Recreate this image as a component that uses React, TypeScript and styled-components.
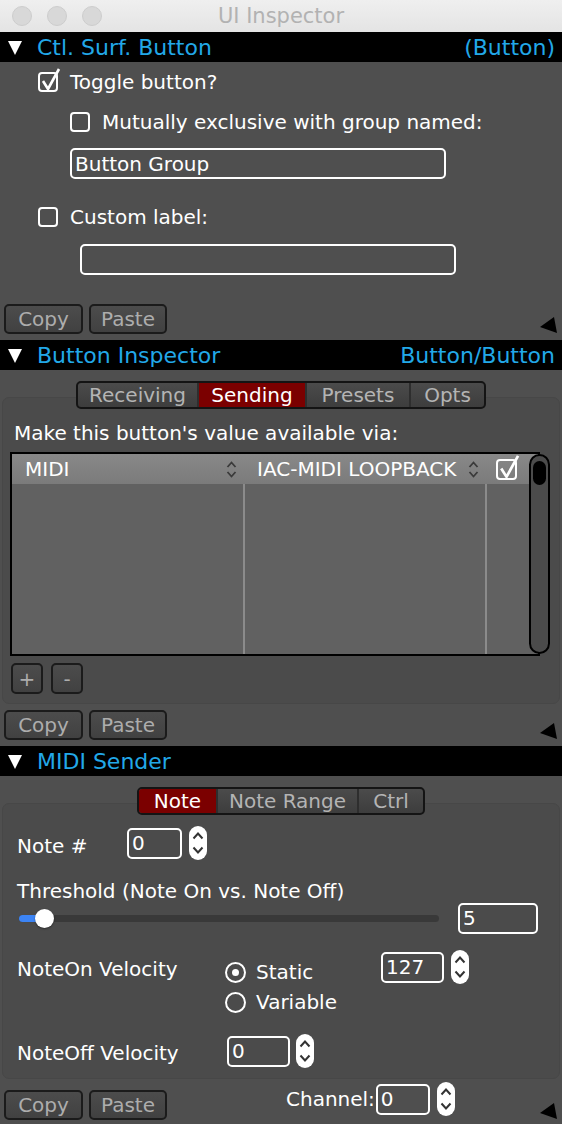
import React from "react";
import styled, { createGlobalStyle } from "styled-components";

const GlobalStyle = createGlobalStyle`
  html, body {
    margin: 0;
    padding: 0;
    background: #4f4f4f;
  }
  body {
    font-family: "DejaVu Sans", "Liberation Sans", sans-serif;
    color: #ffffff;
  }
  * {
    box-sizing: border-box;
  }
`;

const Window = styled.div`
  width: 562px;
  height: 1124px;
  overflow: hidden;
  background: #4f4f4f;
  display: flex;
  flex-direction: column;
`;

const TitleBar = styled.div`
  height: 32px;
  flex: none;
  display: grid;
  grid-template-columns: 1fr auto 1fr;
  align-items: center;
  background: linear-gradient(#efefef, #e4e4e4);
`;

const Lights = styled.div`
  display: flex;
  gap: 15px;
  padding-left: 12px;
`;

const Light = styled.div`
  width: 20px;
  height: 20px;
  border-radius: 50%;
  background: #d8d8d8;
  border: 1px solid #cdcdcd;
`;

const Title = styled.div`
  font-size: 21px;
  color: #b2b2b2;
`;

const SectionHeader = styled.div`
  height: 30px;
  flex: none;
  background: #000;
  display: flex;
  align-items: center;
  padding: 0 7px 0 8px;
  color: #22a8e8;
  font-size: 22px;
`;

const HeaderRight = styled.span`
  margin-left: auto;
`;

const HeaderTitle = styled.span`
  margin-left: 15px;
`;

const Body = styled.div`
  display: flex;
  flex-direction: column;
  padding-bottom: 6px;
`;

const CheckRow = styled.div<{ $indent: number; $mt: number }>`
  display: flex;
  align-items: center;
  gap: 12px;
  height: 24px;
  margin: ${(p) => p.$mt}px 0 0 ${(p) => p.$indent}px;
  font-size: 20px;
`;

const Box = styled.div<{ $size: number }>`
  position: relative;
  width: ${(p) => p.$size}px;
  height: ${(p) => p.$size}px;
  border: 2px solid #fff;
  border-radius: 4px;
  flex: none;
`;

const CheckMark = styled.svg`
  position: absolute;
  left: -2px;
  top: -2px;
  overflow: visible;
`;

const TextField = styled.div<{ $w: number; $ml: number; $mt: number }>`
  width: ${(p) => p.$w}px;
  height: 31px;
  margin: ${(p) => p.$mt}px 0 0 ${(p) => p.$ml}px;
  border: 2px solid #fff;
  border-radius: 5px;
  padding: 0 3px;
  display: flex;
  align-items: center;
  font-size: 20px;
  flex: none;
`;

const Footer = styled.div<{ $mt: number; $h: number }>`
  display: flex;
  align-items: flex-end;
  gap: 6px;
  height: ${(p) => p.$h}px;
  margin-top: ${(p) => p.$mt}px;
  padding: 0 5px 0 4px;
`;

const ToolButton = styled.div<{ $w: number; $h: number }>`
  width: ${(p) => p.$w}px;
  height: ${(p) => p.$h}px;
  border: 2px solid #1b1b1b;
  border-radius: 5px;
  background: linear-gradient(#4c4c4c, #414141);
  color: #adadad;
  font-size: 20px;
  display: flex;
  align-items: center;
  justify-content: center;
  flex: none;
`;

const Grip = styled.svg`
  margin-left: auto;
  margin-bottom: 1px;
  flex: none;
`;

const TabBar = styled.div<{ $mt: number }>`
  align-self: center;
  display: flex;
  height: 28px;
  margin-top: ${(p) => p.$mt}px;
  margin-bottom: -12px;
  border: 2px solid #141414;
  border-radius: 5px;
  overflow: hidden;
  background: linear-gradient(#4b4b4b, #3d3d3d);
  position: relative;
  z-index: 1;
`;

const Tab = styled.div<{ $active?: boolean; $w: number }>`
  width: ${(p) => p.$w}px;
  display: flex;
  align-items: center;
  justify-content: center;
  font-size: 20px;
  color: ${(p) => (p.$active ? "#ffffff" : "#b4b4b4")};
  background: ${(p) => (p.$active ? "#7b0000" : "transparent")};

  & + & {
    border-left: 2px solid #2e2e2e;
  }
`;

const Panel = styled.div<{ $pt: number; $pb: number }>`
  margin: 0 2px;
  border: 1px solid #474747;
  border-radius: 7px;
  background: #4b4b4b;
  padding: ${(p) => p.$pt}px 0 ${(p) => p.$pb}px 0;
  display: flex;
  flex-direction: column;
`;

const PanelText = styled.div`
  font-size: 20px;
  line-height: 22px;
  padding-left: 11px;
`;

const TableWrap = styled.div`
  position: relative;
  width: 530px;
  height: 204px;
  margin: 8px 0 0 7px;
  border: 2px solid #000;
  background: #616161;
  display: grid;
  grid-template-columns: 233px 242px 1fr;
  grid-template-rows: 30px 1fr;
`;

const HeadCell = styled.div<{ $pl: number; $pr: number }>`
  display: flex;
  align-items: center;
  background: linear-gradient(#888888, #7b7b7b);
  padding: 0 ${(p) => p.$pr}px 0 ${(p) => p.$pl}px;
  font-size: 20px;
`;

const HeadLabel = styled.span`
  flex: 1;
  white-space: nowrap;
`;

const BodyCell = styled.div<{ $divider?: boolean }>`
  border-right: ${(p) => (p.$divider ? "2px solid #8b8b8b" : "none")};
`;

const ScrollTrack = styled.div`
  position: absolute;
  left: 517px;
  top: 0px;
  width: 21px;
  height: 200px;
  border: 2px solid #000;
  border-radius: 11px;
  background: #4b4b4b;
  padding: 5px 2px;
`;

const ScrollThumb = styled.div`
  width: 13px;
  height: 24px;
  border-radius: 7px;
  background: #000;
`;

const SmallButtons = styled.div`
  display: flex;
  gap: 8px;
  margin: 7px 0 0 8px;
`;

const FormRow = styled.div<{ $mt: number; $h?: number }>`
  display: flex;
  align-items: ${(p) => (p.$h ? "center" : "flex-start")};
  height: ${(p) => (p.$h ? `${p.$h}px` : "auto")};
  margin-top: ${(p) => p.$mt}px;
  padding-left: 14px;
`;

const Label = styled.div<{ $w?: number; $mt?: number }>`
  width: ${(p) => (p.$w ? `${p.$w}px` : "auto")};
  margin-top: ${(p) => p.$mt ?? 0}px;
  font-size: 20px;
  line-height: 22px;
  flex: none;
  white-space: nowrap;
`;

const NumberField = styled.div<{ $w: number }>`
  width: ${(p) => p.$w}px;
  height: 31px;
  border: 2px solid #fff;
  border-radius: 5px;
  padding: 0 3px;
  display: flex;
  align-items: center;
  font-size: 20px;
  flex: none;
`;

const SpinGroup = styled.div<{ $gap: number }>`
  display: flex;
  align-items: center;
  gap: ${(p) => p.$gap}px;
  flex: none;
`;

const Pill = styled.div`
  width: 18px;
  height: 34px;
  border-radius: 9px;
  background: #fff;
  flex: none;
  display: flex;
`;

const SliderTrack = styled.div`
  position: relative;
  width: 420px;
  height: 7px;
  margin: 0 19px 0 2px;
  border-radius: 4px;
  background: #393939;
`;

const SliderFill = styled.div`
  height: 100%;
  border-radius: 4px;
  background: #3c84f5;
`;

const SliderThumb = styled.div`
  position: absolute;
  top: -6px;
  width: 19px;
  height: 19px;
  border-radius: 50%;
  background: #fff;
  box-shadow: 0 1px 2px rgba(0, 0, 0, 0.4);
`;

const RadioGroup = styled.div`
  width: 156px;
  margin-top: 7px;
  display: flex;
  flex-direction: column;
  flex: none;
`;

const RadioRow = styled.div`
  display: flex;
  align-items: center;
  gap: 10px;
  height: 30px;
  font-size: 20px;
`;

const RadioCircle = styled.div<{ $on?: boolean }>`
  width: 21px;
  height: 21px;
  border-radius: 50%;
  border: 2px solid #fff;
  display: flex;
  align-items: center;
  justify-content: center;

  &::after {
    content: "";
    display: ${(p) => (p.$on ? "block" : "none")};
    width: 7px;
    height: 7px;
    border-radius: 50%;
    background: #fff;
  }
`;

const ChannelGroup = styled.div`
  display: flex;
  align-items: center;
  align-self: flex-start;
  margin-left: 113px;
  gap: 1px;
`;

const TriangleDown = () => (
  <svg width="14" height="15" viewBox="0 0 14 15">
    <polygon points="0,1 14,1 7,15" fill="#fff" />
  </svg>
);

const Checkbox = ({ checked, size = 20 }: { checked?: boolean; size?: number }) => (
  <Box $size={size}>
    {checked && (
      <CheckMark width={size} height={size} viewBox="0 0 20 20">
        <polyline
          points="5,9 10,17 21,-3"
          fill="none"
          stroke="#fff"
          strokeWidth="2.6"
          strokeLinejoin="round"
        />
      </CheckMark>
    )}
  </Box>
);

const UpDown = () => (
  <svg width="11" height="19" viewBox="0 0 11 19">
    <polyline points="1.5,7 5.5,2.5 9.5,7" fill="none" stroke="#3a3a3a" strokeWidth="1.8" />
    <polyline points="1.5,12 5.5,16.5 9.5,12" fill="none" stroke="#3a3a3a" strokeWidth="1.8" />
  </svg>
);

const Stepper = () => (
  <Pill>
    <svg width="18" height="34" viewBox="0 0 18 34">
      <polyline points="4.5,12.5 9,7.5 13.5,12.5" fill="none" stroke="#333" strokeWidth="2" />
      <polyline points="4.5,21.5 9,26.5 13.5,21.5" fill="none" stroke="#333" strokeWidth="2" />
    </svg>
  </Pill>
);

const CornerGrip = () => (
  <Grip width="17" height="16" viewBox="0 0 17 16">
    <polygon points="14,0 0,10 17,16" fill="#000" />
  </Grip>
);

const CopyPaste = () => (
  <>
    <ToolButton $w={79} $h={30}>Copy</ToolButton>
    <ToolButton $w={78} $h={30}>Paste</ToolButton>
  </>
);

const Header = ({ title, right }: { title: string; right?: string }) => (
  <SectionHeader>
    <TriangleDown />
    <HeaderTitle>{title}</HeaderTitle>
    {right && <HeaderRight>{right}</HeaderRight>}
  </SectionHeader>
);

const SpinBox = ({ value, w, gap }: { value: string; w: number; gap: number }) => (
  <SpinGroup $gap={gap}>
    <NumberField $w={w}>{value}</NumberField>
    <Stepper />
  </SpinGroup>
);

const sendingTabs = [
  { name: "Receiving", w: 119 },
  { name: "Sending", w: 108, active: true },
  { name: "Presets", w: 104 },
  { name: "Opts", w: 75 },
];

const midiTabs = [
  { name: "Note", w: 77, active: true },
  { name: "Note Range", w: 141 },
  { name: "Ctrl", w: 66 },
];

const threshold = 5;

export default function App() {
  return (
    <Window>
      <GlobalStyle />
      <TitleBar>
        <Lights>
          <Light />
          <Light />
          <Light />
        </Lights>
        <Title>UI Inspector</Title>
        <div />
      </TitleBar>

      <Header title="Ctl. Surf. Button" right="(Button)" />
      <Body>
        <CheckRow $indent={38} $mt={8}>
          <Checkbox checked />
          Toggle button?
        </CheckRow>
        <CheckRow $indent={70} $mt={16}>
          <Checkbox />
          Mutually exclusive with group named:
        </CheckRow>
        <TextField $w={376} $ml={70} $mt={14}>
          Button Group
        </TextField>
        <CheckRow $indent={38} $mt={26}>
          <Checkbox />
          Custom label:
        </CheckRow>
        <TextField $w={376} $ml={80} $mt={15} />
        <Footer $mt={29} $h={30}>
          <CopyPaste />
          <CornerGrip />
        </Footer>
      </Body>

      <Header title="Button Inspector" right="Button/Button" />
      <Body>
        <TabBar $mt={11}>
          {sendingTabs.map((t) => (
            <Tab key={t.name} $w={t.w} $active={t.active}>
              {t.name}
            </Tab>
          ))}
        </TabBar>
        <Panel $pt={24} $pb={9}>
          <PanelText>Make this button's value available via:</PanelText>
          <TableWrap>
            <HeadCell $pl={13} $pr={8}>
              <HeadLabel>MIDI</HeadLabel>
              <UpDown />
            </HeadCell>
            <HeadCell $pl={12} $pr={8}>
              <HeadLabel>IAC-MIDI LOOPBACK</HeadLabel>
              <UpDown />
            </HeadCell>
            <HeadCell $pl={9} $pr={0}>
              <Checkbox checked size={21} />
            </HeadCell>
            <BodyCell $divider />
            <BodyCell $divider />
            <BodyCell />
            <ScrollTrack>
              <ScrollThumb />
            </ScrollTrack>
          </TableWrap>
          <SmallButtons>
            <ToolButton $w={32} $h={31}>+</ToolButton>
            <ToolButton $w={32} $h={31}>-</ToolButton>
          </SmallButtons>
        </Panel>
        <Footer $mt={7} $h={29}>
          <CopyPaste />
          <CornerGrip />
        </Footer>
      </Body>

      <Header title="MIDI Sender" />
      <Body>
        <TabBar $mt={11}>
          {midiTabs.map((t) => (
            <Tab key={t.name} $w={t.w} $active={t.active}>
              {t.name}
            </Tab>
          ))}
        </TabBar>
        <Panel $pt={22} $pb={10}>
          <FormRow $mt={0} $h={34}>
            <Label $w={110} $mt={6}>Note #</Label>
            <SpinBox value="0" w={55} gap={7} />
          </FormRow>
          <FormRow $mt={20}>
            <Label>Threshold (Note On vs. Note Off)</Label>
          </FormRow>
          <FormRow $mt={1} $h={30}>
            <SliderTrack>
              <SliderFill style={{ width: `${threshold * 5}px` }} />
              <SliderThumb style={{ left: `${threshold * 5 - 9}px` }} />
            </SliderTrack>
            <NumberField $w={80}>{threshold}</NumberField>
          </FormRow>
          <FormRow $mt={17}>
            <Label $w={208} $mt={8}>NoteOn Velocity</Label>
            <RadioGroup>
              <RadioRow>
                <RadioCircle $on />
                Static
              </RadioRow>
              <RadioRow>
                <RadioCircle />
                Variable
              </RadioRow>
            </RadioGroup>
            <SpinBox value="127" w={63} gap={7} />
          </FormRow>
          <FormRow $mt={17} $h={34}>
            <Label $w={210} $mt={4}>NoteOff Velocity</Label>
            <SpinBox value="0" w={63} gap={6} />
          </FormRow>
        </Panel>
        <Footer $mt={3} $h={38}>
          <CopyPaste />
          <ChannelGroup>
            <Label>Channel:</Label>
            <SpinBox value="0" w={54} gap={7} />
          </ChannelGroup>
          <CornerGrip />
        </Footer>
      </Body>
    </Window>
  );
}
